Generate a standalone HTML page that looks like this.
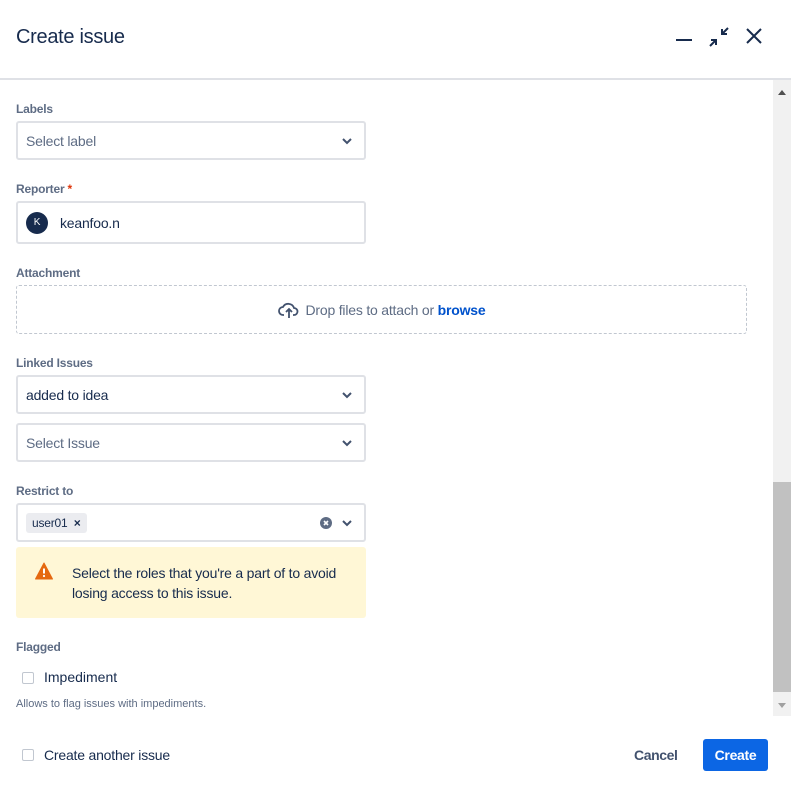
<!DOCTYPE html>
<html><head><style>
*{box-sizing:border-box;margin:0;padding:0}
body{width:791px;height:792px;background:#fff;font-family:"Liberation Sans",sans-serif;color:#172b4d;position:relative;overflow:hidden;font-size:14px}
.a{position:absolute}
.lbl{position:absolute;left:16px;font-size:12px;font-weight:bold;color:#5e6c84;letter-spacing:-0.2px}
.fld{position:absolute;left:16px;width:350px;border:2px solid #dfe1e6;border-radius:3px;background:#fff;display:flex;align-items:center;padding-left:8px;letter-spacing:-0.2px}
.chev{position:absolute;right:12px;top:50%;margin-top:-4px}
.cb{position:absolute;width:12px;height:12px;border:1.5px solid #c1c7d0;border-radius:2px;background:#fff}
</style></head><body>
<div class="a" style="left:16px;top:26px;font-size:20px;color:#172b4d;letter-spacing:-0.3px">Create issue</div>
<svg class="a" style="left:674px;top:26px" width="96" height="22"><path d="M2 14h16" stroke="#172b4d" stroke-width="2"/><path d="M54 2l-6 6M48 3v5h5M36 20l6-6M42 19v-5h-5" stroke="#172b4d" stroke-width="2" fill="none"/><path d="M73 3l14 14M87 3L73 17" stroke="#172b4d" stroke-width="2"/></svg>
<div class="a" style="left:0;top:78px;width:791px;height:2px;background:#dfe1e6"></div>
<div class="a" style="left:773px;top:80px;width:18px;height:636px;background:#f1f1f1"></div>
<div class="a" style="left:773px;top:482px;width:18px;height:210px;background:#c1c1c1"></div>
<svg class="a" style="left:777px;top:88px" width="10" height="8"><path d="M1 7L5 2L9 7Z" fill="#505050"/></svg>
<svg class="a" style="left:777px;top:702px" width="10" height="8"><path d="M1 1L5 6L9 1Z" fill="#a0a0a0"/></svg>

<div class="lbl" style="top:102px">Labels</div>
<div class="fld" style="top:121px;height:39px;color:#5e6c84">Select label<svg class="chev" width="10" height="8"><path d="M1 2l4 4 4-4" stroke="#42526e" stroke-width="2" fill="none"/></svg></div>

<div class="lbl" style="top:182px">Reporter<span style="color:#de350b"> *</span></div>
<div class="fld" style="top:201px;height:43px"><span style="width:22px;height:22px;border-radius:50%;background:#172b4d;color:#fff;font-size:10px;display:inline-flex;align-items:center;justify-content:center;margin-right:12px">K</span>keanfoo.n</div>

<div class="lbl" style="top:266px">Attachment</div>
<div class="a" style="left:16px;top:285px;width:731px;height:49px;border:1px dashed #c1c7d0;border-radius:3px;display:flex;align-items:center;justify-content:center;color:#5e6c84;letter-spacing:-0.2px">
<svg width="22" height="18" style="margin-right:6px"><path d="M6 14H5a4 4 0 0 1 0-8 6 6 0 0 1 11 1 3.5 3.5 0 0 1 0 7h-1M11 17V9M8 11l3-3 3 3" stroke="#42526e" stroke-width="1.8" fill="none"/></svg>Drop files to attach or&nbsp;<b style="color:#0052cc">browse</b></div>

<div class="lbl" style="top:356px">Linked Issues</div>
<div class="fld" style="top:375px;height:39px">added to idea<svg class="chev" width="10" height="8"><path d="M1 2l4 4 4-4" stroke="#42526e" stroke-width="2" fill="none"/></svg></div>
<div class="fld" style="top:423px;height:39px;color:#5e6c84">Select Issue<svg class="chev" width="10" height="8"><path d="M1 2l4 4 4-4" stroke="#42526e" stroke-width="2" fill="none"/></svg></div>

<div class="lbl" style="top:484px">Restrict to</div>
<div class="fld" style="top:503px;height:39px"><span style="background:#ebecf0;border-radius:3px;padding:3px 6px;font-size:12px;color:#172b4d">user01 &nbsp;<b>×</b></span>
<svg class="a" style="right:32px;top:12px" width="12" height="12"><circle cx="6" cy="6" r="6" fill="#5e6c84"/><path d="M4 4l4 4M8 4l-4 4" stroke="#fff" stroke-width="1.6"/></svg>
<svg class="chev" width="10" height="8"><path d="M1 2l4 4 4-4" stroke="#42526e" stroke-width="2" fill="none"/></svg></div>
<div class="a" style="left:16px;top:547px;width:350px;height:71px;background:#fff7d6;border-radius:3px"></div>
<svg class="a" style="left:35px;top:562px" width="18" height="18"><path d="M9 1L17.5 17H0.5Z" fill="#e56910" stroke="#e56910" stroke-linejoin="round"/><path d="M9 6.5v5" stroke="#fff" stroke-width="2"/><circle cx="9" cy="14" r="1.1" fill="#fff"/></svg>
<div class="a" style="left:72px;top:563px;width:290px;line-height:20px;color:#172b4d;letter-spacing:-0.2px">Select the roles that you're a part of to avoid losing access to this issue.</div>

<div class="lbl" style="top:640px">Flagged</div>
<div class="cb" style="left:22px;top:672px"></div>
<div class="a" style="left:44px;top:669px">Impediment</div>
<div class="a" style="left:16px;top:698px;font-size:11px;color:#5e6c84">Allows to flag issues with impediments.</div>

<div class="cb" style="left:22px;top:749px"></div>
<div class="a" style="left:44px;top:747px;letter-spacing:-0.2px">Create another issue</div>
<div class="a" style="left:634px;top:747px;color:#42526e;font-weight:bold;letter-spacing:-0.4px">Cancel</div>
<div class="a" style="left:703px;top:739px;width:65px;height:32px;background:#0c66e4;border-radius:3px;color:#fff;font-weight:bold;display:flex;align-items:center;justify-content:center;letter-spacing:-0.3px">Create</div>
</body></html>
